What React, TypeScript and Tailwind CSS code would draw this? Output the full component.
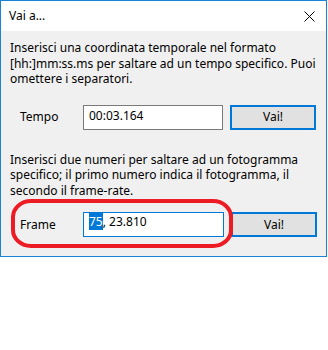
import React from 'react';

const font = { fontFamily: '"Noto Sans", "Open Sans", sans-serif' };

const GoButton: React.FC = () => (
  <button className="ml-[7px] flex h-[25px] w-[86px] items-center justify-center border-2 border-[#0078d7] bg-[#e1e1e1] text-[12px] text-black">
    Vai!
  </button>
);

export default function App() {
  return (
    <div className="h-[350px] w-[328px] bg-white text-black" style={font}>
      <div className="relative flex h-[257px] w-[327px] flex-col border border-[#1883d7] bg-[#f0f0f0]">
        {/* title bar */}
        <div className="flex h-[30px] items-center justify-between bg-white pl-[8px] pr-[10px]">
          <span className="text-[12px]">Vai a...</span>
          <svg width="11" height="11" viewBox="0 0 11 11" className="mr-[1px]">
            <path d="M0.5 0.5 L10.5 10.5 M10.5 0.5 L0.5 10.5" stroke="#000" strokeWidth="1" />
          </svg>
        </div>

        <div className="flex flex-col pl-[9px] pt-[9px] text-[12px] leading-[15.5px]">
          <p className="w-[312px]">
            Inserisci una coordinata temporale nel formato [hh:]mm:ss.ms per saltare ad un tempo specifico. Puoi omettere i separatori.
          </p>

          <div className="mt-[18px] flex items-center">
            <span className="w-[73px] pl-[10px]">Tempo</span>
            <div className="h-[25px] w-[140px] border border-[#7a7a7a] bg-white pl-[5px] pt-[2px]">00:03.164</div>
            <GoButton />
          </div>

          <p className="mt-[22px] w-[312px]">
            Inserisci due numeri per saltare ad un fotogramma specifico; il primo numero indica il fotogramma, il secondo il frame-rate.
          </p>

          <div className="mt-[14px] flex items-center">
            <span className="w-[73px] pl-[10px]">Frame</span>
            <div className="h-[25px] w-[141px] border border-[#0078d7] bg-white pl-[5px] pt-[1px]">
              <span className="bg-[#0078d7] text-white">75</span>, 23.810
            </div>
            <GoButton />
          </div>
        </div>

        {/* red annotation */}
        <svg className="pointer-events-none absolute left-[-1px] top-[-1px]" width="328" height="257">
          <rect x="13" y="201" width="218" height="45" rx="18" ry="16" fill="none" stroke="#ed1c24" strokeWidth="4" />
        </svg>
      </div>
    </div>
  );
}
